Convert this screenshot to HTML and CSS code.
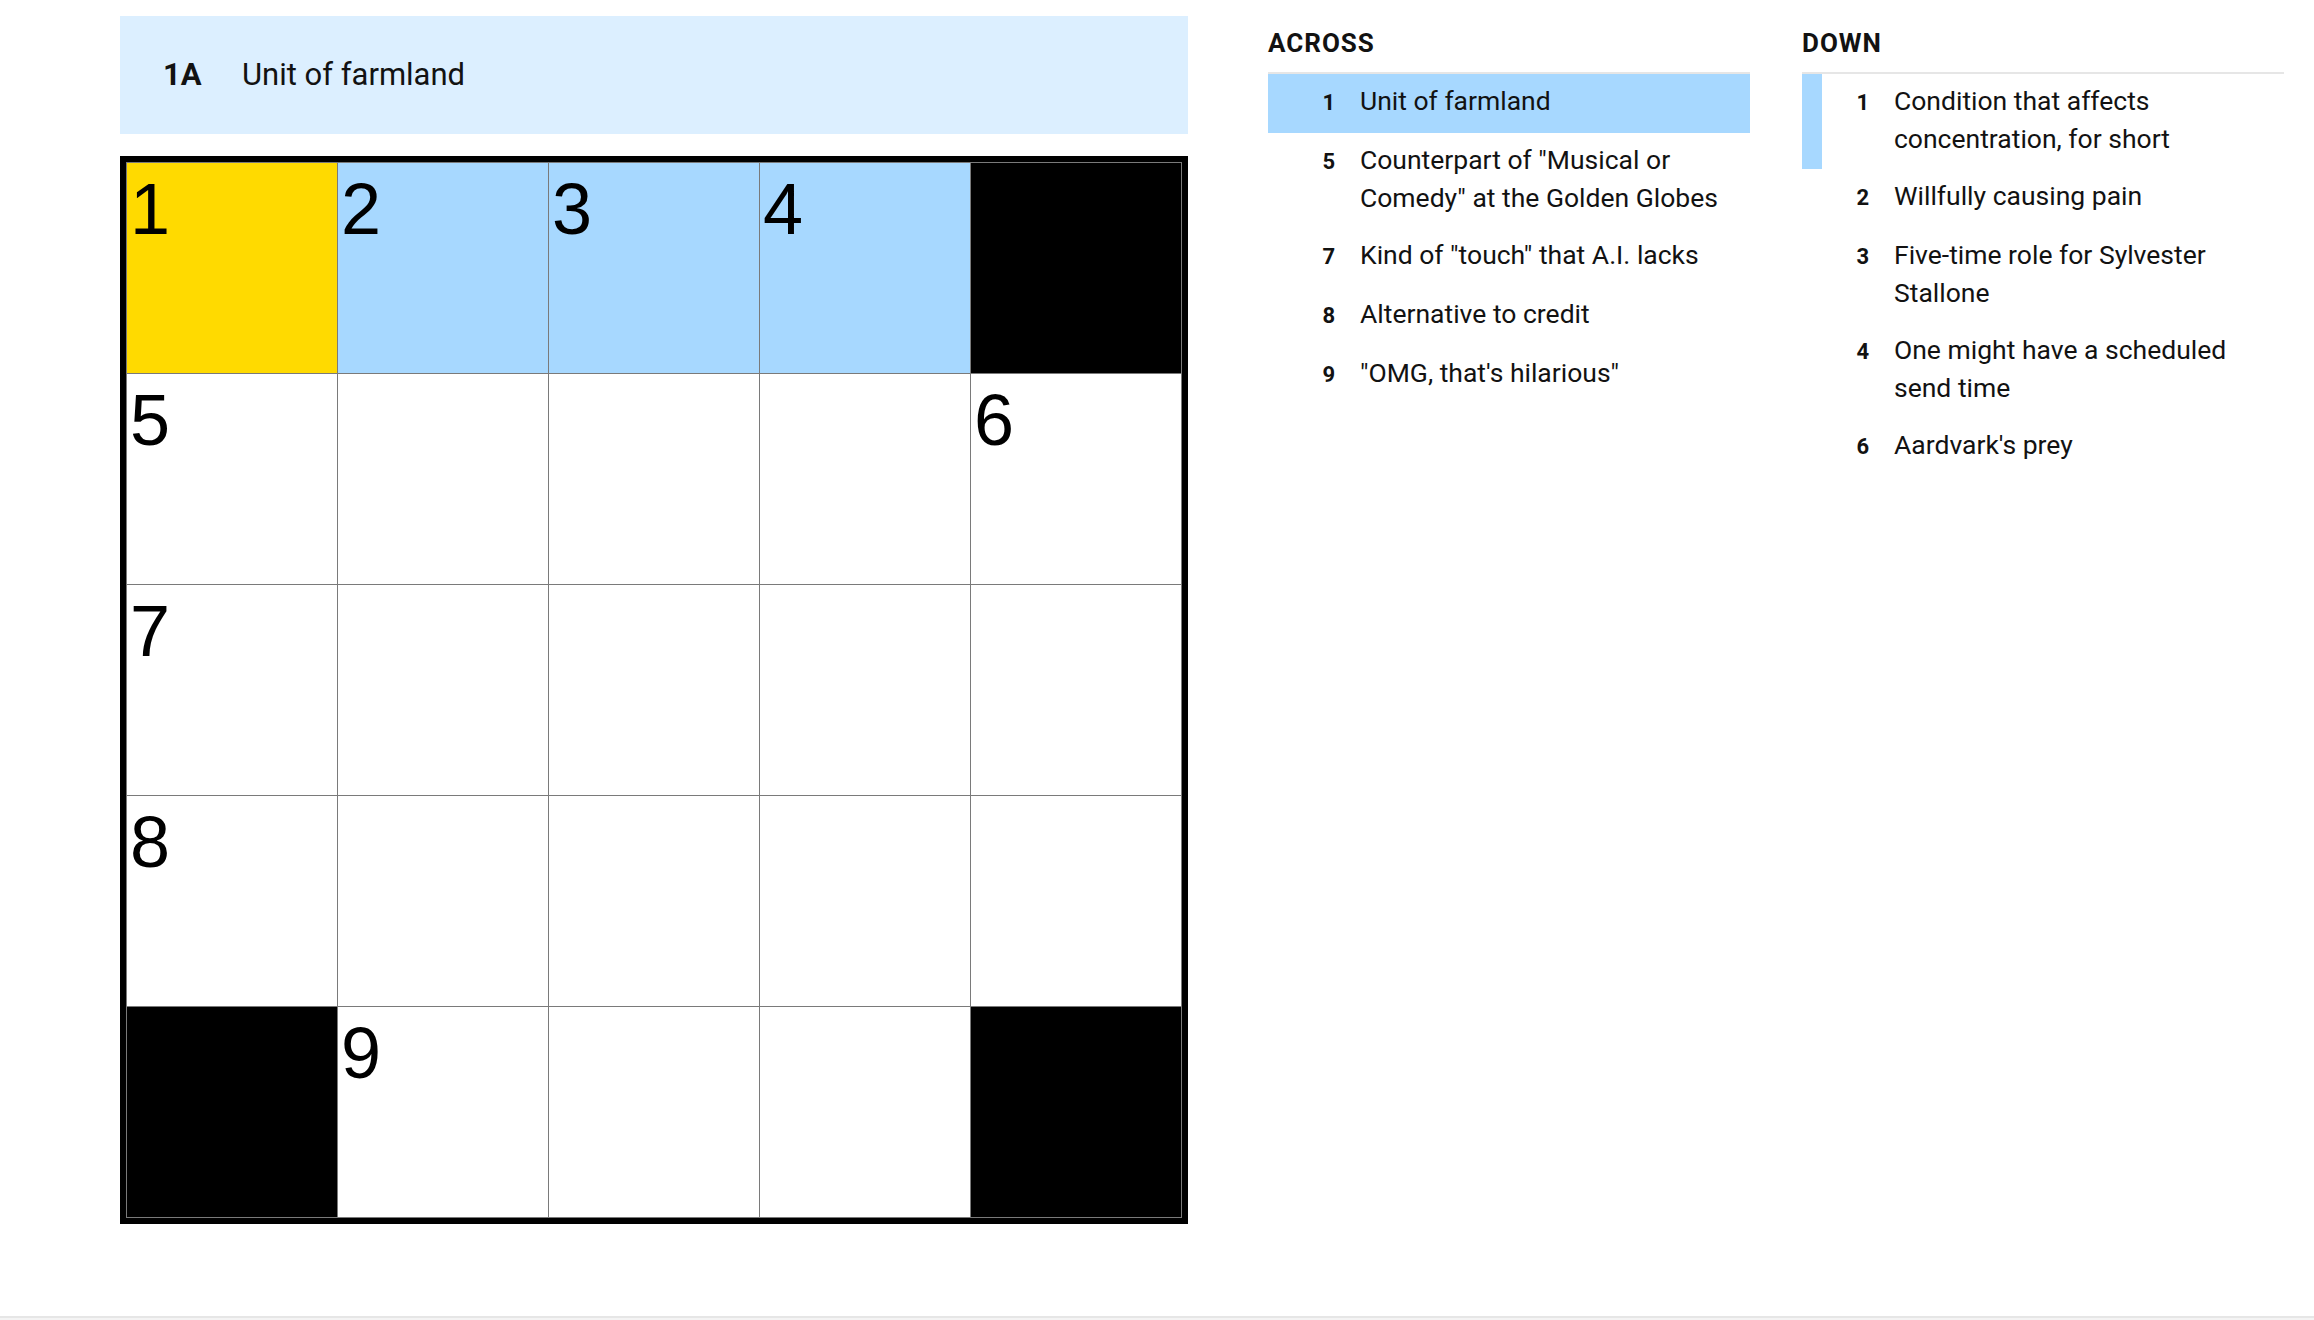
FILE: index.html
```html
<!DOCTYPE html>
<html lang="en">

<head>
    <title>Mini Crossword</title>
    <link rel="stylesheet" href="styles.css">
</head>

<body>
    <div class="page">
        <main class="layout">
            <section class="puzzle">
                <div class="clue_bar">
                    <span class="clue_bar_label">1A</span>
                    <span class="clue_bar_text">Unit of farmland</span>
                </div>
                <div class="board">
                    <!-- row 1 -->
                    <div class="cell cell_selected"><span class="cell_num">1</span></div>
                    <div class="cell cell_word"><span class="cell_num">2</span></div>
                    <div class="cell cell_word"><span class="cell_num">3</span></div>
                    <div class="cell cell_word"><span class="cell_num">4</span></div>
                    <div class="cell cell_block"></div>
                    <!-- row 2 -->
                    <div class="cell"><span class="cell_num">5</span></div>
                    <div class="cell"></div>
                    <div class="cell"></div>
                    <div class="cell"></div>
                    <div class="cell"><span class="cell_num">6</span></div>
                    <!-- row 3 -->
                    <div class="cell"><span class="cell_num">7</span></div>
                    <div class="cell"></div>
                    <div class="cell"></div>
                    <div class="cell"></div>
                    <div class="cell"></div>
                    <!-- row 4 -->
                    <div class="cell"><span class="cell_num">8</span></div>
                    <div class="cell"></div>
                    <div class="cell"></div>
                    <div class="cell"></div>
                    <div class="cell"></div>
                    <!-- row 5 -->
                    <div class="cell cell_block"></div>
                    <div class="cell"><span class="cell_num">9</span></div>
                    <div class="cell"></div>
                    <div class="cell"></div>
                    <div class="cell cell_block"></div>
                </div>
            </section>

            <section class="clues">
                <div class="clue_list">
                    <h3 class="clue_list_title">ACROSS</h3>
                    <ol class="clue_list_items">
                        <li class="clue clue_selected"><span class="clue_num">1</span><span class="clue_text">Unit of farmland</span></li>
                        <li class="clue"><span class="clue_num">5</span><span class="clue_text">Counterpart of "Musical or Comedy" at the Golden Globes</span></li>
                        <li class="clue"><span class="clue_num">7</span><span class="clue_text">Kind of "touch" that A.I. lacks</span></li>
                        <li class="clue"><span class="clue_num">8</span><span class="clue_text">Alternative to credit</span></li>
                        <li class="clue"><span class="clue_num">9</span><span class="clue_text">"OMG, that's hilarious"</span></li>
                    </ol>
                </div>
                <div class="clue_list">
                    <h3 class="clue_list_title">DOWN</h3>
                    <ol class="clue_list_items">
                        <li class="clue clue_crossed"><span class="clue_num">1</span><span class="clue_text">Condition that affects concentration, for short</span></li>
                        <li class="clue"><span class="clue_num">2</span><span class="clue_text">Willfully causing pain</span></li>
                        <li class="clue"><span class="clue_num">3</span><span class="clue_text">Five-time role for Sylvester Stallone</span></li>
                        <li class="clue"><span class="clue_num">4</span><span class="clue_text">One might have a scheduled send time</span></li>
                        <li class="clue"><span class="clue_num">6</span><span class="clue_text">Aardvark's prey</span></li>
                    </ol>
                </div>
            </section>
        </main>
        <footer class="toolbar"></footer>
    </div>
</body>

</html>
```

FILE: styles.css
```css
* {
    margin: 0;
    padding: 0;
    box-sizing: border-box;
}

body {
    font-family: Roboto, "Liberation Sans", sans-serif;
    color: #121212;
    background-color: #fff;
}

.page {
    display: flex;
    flex-direction: column;
    height: 100vh;
}

.layout {
    flex: 1;
    display: flex;
    gap: 80px;
    padding: 16px 0 0 120px;
}

/* current clue + board */
.puzzle {
    width: 1068px;
}

.clue_bar {
    display: flex;
    align-items: center;
    height: 118px;
    padding-left: 43px;
    background-color: #dcefff;
    font-size: 31px;
    line-height: 40px;
}

.clue_bar_label {
    width: 79px;
    font-weight: 700;
}

.board {
    display: grid;
    grid-template-columns: repeat(5, 210px);
    grid-template-rows: repeat(5, 210px);
    gap: 1px;
    margin-top: 22px;
    padding: 1px;
    border: 6px solid #000;
    background-color: #7a7a7a;
}

.cell {
    background-color: #fff;
    padding: 10px 0 0 3px;
}

.cell_num {
    font-family: "Liberation Sans", Arial, sans-serif;
    font-size: 72px;
    line-height: 1;
    color: #000;
}

.cell_selected {
    background-color: #ffda00;
}

.cell_word {
    background-color: #a7d8ff;
}

.cell_block {
    background-color: #000;
}

/* clue lists */
.clues {
    display: flex;
    gap: 52px;
}

.clue_list {
    width: 482px;
}

.clue_list_title {
    padding: 11px 0 13px;
    font-size: 26px;
    line-height: 32px;
    font-weight: 700;
    letter-spacing: 1px;
}

.clue_list_items {
    list-style: none;
    border-top: 2px solid #e6e6e6;
}

.clue {
    display: flex;
    align-items: baseline;
    padding: 8px 12px 11px 0;
    border-left: 20px solid transparent;
    font-size: 26.5px;
    line-height: 38px;
}

.clue_num {
    flex: none;
    width: 47px;
    text-align: right;
    font-size: 22px;
    font-weight: 700;
}

.clue_text {
    margin-left: 25px;
}

.clue_selected {
    background-color: #a7d8ff;
    border-left-color: #a7d8ff;
}

.clue_crossed {
    border-left-color: #a7d8ff;
}

.toolbar {
    height: 4px;
    border-top: 2px solid #e6e6e6;
    background-color: #f4f4f4;
}
```
